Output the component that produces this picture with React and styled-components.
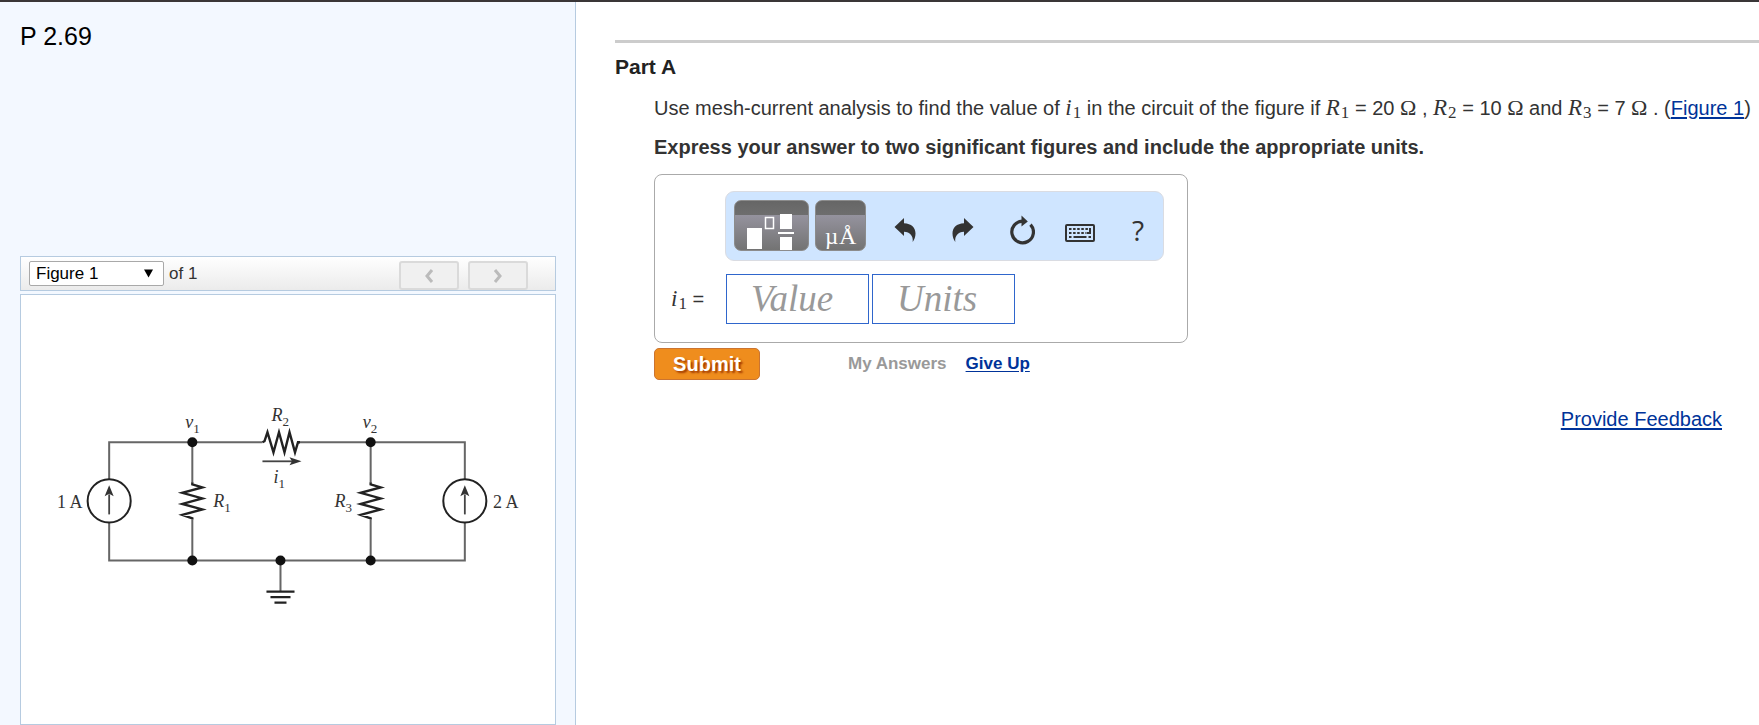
import { useState } from 'react';
import styled, { createGlobalStyle } from 'styled-components';

const sans = '"Liberation Sans", Arial, sans-serif';
const serif = '"Liberation Serif", "Times New Roman", serif';

const GlobalStyle = createGlobalStyle`
	* {
		box-sizing: border-box;
	}
	body {
		margin: 0;
		font-family: ${sans};
		font-size: 20px;
		line-height: 24px;
		color: #333;
		background-color: #fff;
	}
`;

const Page = styled.div`
	min-height: 100vh;
	display: grid;
	grid-template-columns: minmax(320px, 576px) minmax(0, 1fr);
	border-top: 2px solid #3a3637;
`;

const Sidebar = styled.aside`
	display: flex;
	flex-direction: column;
	padding: 19px 19px 0 20px;
	background-color: #f3f8ff;
	border-right: 1px solid #b6cbe0;
`;

const ProblemTitle = styled.h1`
	margin: 0;
	height: 235px;
	font-size: 25px;
	font-weight: 400;
	line-height: 30px;
	color: #000;
`;

const FigureBar = styled.div`
	display: flex;
	align-items: flex-start;
	height: 35px;
	margin-bottom: 3px;
	padding: 4px 27px 0 8px;
	border: 1px solid #b6cbe0;
	background-image: linear-gradient(#fff, #ebebeb);
	font-size: 17px;
	line-height: 26px;
`;

const SelectWrapper = styled.div`
	position: relative;
	width: 135px;
	margin-right: 5px;

	svg {
		position: absolute;
		top: 8px;
		right: 11px;
		pointer-events: none;
	}
`;

const FigureSelect = styled.select`
	display: block;
	width: 100%;
	height: 25px;
	padding: 0 6px;
	appearance: none;
	border: 1px solid #a9a9a9;
	border-radius: 2px;
	background-color: #fff;
	font-family: inherit;
	font-size: 17px;
	color: #000;
`;

const Pager = styled.div`
	display: flex;
	gap: 9px;
	margin-left: auto;
`;

const PagerButton = styled.button`
	display: flex;
	align-items: center;
	justify-content: center;
	width: 60px;
	height: 29px;
	padding: 0;
	border: 2px solid #dadada;
	border-radius: 3px;
	background-color: #f0f0f0;
`;

const FigureFrame = styled.div`
	flex: 1;
	border: 1px solid #b6cbe0;
	border-bottom: none;
	background-color: #fff;

	svg {
		display: block;
		width: 100%;
		height: auto;
		border-bottom: 1px solid #b6cbe0;
	}
`;

const Main = styled.main`
	padding: 38px 0 0 39px;
`;

const PartTitle = styled.h2`
	margin: 0;
	padding-top: 12px;
	border-top: 3px solid #ccc;
	font-size: 21px;
	line-height: 24px;
	color: #222;
`;

const PartBody = styled.div`
	padding: 17px 0 0 39px;
`;

const Question = styled.p`
	margin: 0 0 15px;
`;

const Instruction = styled.p`
	margin: 0 0 15px;
	font-weight: 700;
`;

const Var = styled.var`
	font-family: ${serif};
	font-size: 23px;
	line-height: 20px;

	sub {
		margin-left: 1px;
		font-size: 17px;
		line-height: 0;
		font-style: normal;
		vertical-align: -3px;
	}
`;

const Unit = styled.span`
	font-family: ${serif};
	font-size: 22px;
	line-height: 20px;
`;

const Link = styled.a`
	color: #003399;
	text-decoration: underline;
	text-underline-offset: 2px;
`;

const AnswerBox = styled.div`
	max-width: 534px;
	padding: 16px 23px 18px 14px;
	border: 1px solid #aaa;
	border-radius: 8px;
`;

const Toolbar = styled.div`
	display: flex;
	align-items: flex-start;
	height: 70px;
	margin-left: 56px;
	padding: 8px;
	border: 1px solid #dadce2;
	border-radius: 9px;
	background-color: #cfe5ff;
`;

const PaletteButton = styled.button`
	flex: none;
	width: ${(props) => props.$width}px;
	height: 51px;
	margin-right: 6px;
	padding: 0;
	overflow: hidden;
	border: 1px solid #8c8c8c;
	border-radius: 7px;
	background-image: linear-gradient(#666 0, #6e6e6e 14px, #95939e 14px, #737373 100%);

	svg {
		display: block;
	}
`;

const ToolGroup = styled.div`
	flex: 1;
	display: flex;
	justify-content: space-between;
	padding: 13px 0 0 16px;
`;

const ToolButton = styled.button`
	display: flex;
	align-items: center;
	justify-content: center;
	width: 34px;
	height: 34px;
	padding: 0;
	border: none;
	background: none;
	font-family: "Open Sans", sans-serif;
	font-size: 28px;
	line-height: 28px;
	color: #333;
`;

const AnswerRow = styled.div`
	display: flex;
	align-items: center;
	gap: 3px;
	margin-top: 13px;
`;

const AnswerLabel = styled.label`
	width: 54px;
	padding-left: 2px;
`;

const AnswerInput = styled.input`
	width: 143px;
	height: 50px;
	padding: 0 24px 2px;
	border: 1px solid #2f66cc;
	border-radius: 0;
	background-color: #fff;
	font-family: ${serif};
	font-size: 37px;
	font-style: italic;
	color: #333;

	&::placeholder {
		color: #999;
	}
`;

const Actions = styled.div`
	display: flex;
	align-items: center;
	margin-top: 5px;
	font-size: 17px;
	line-height: 26px;
	font-weight: 700;
`;

const SubmitButton = styled.button`
	width: 106px;
	height: 32px;
	margin-right: 88px;
	padding: 0;
	border: 1px solid #cb7430;
	border-radius: 5px;
	background-color: #ef8d1d;
	font-family: inherit;
	font-size: 20px;
	font-weight: 700;
	color: #fff;
	text-shadow: 2px 2px 2px #a33c00;
`;

const MyAnswers = styled.span`
	margin-right: 19px;
	color: #999;
`;

const Feedback = styled.div`
	padding: 27px 37px 0 0;
	text-align: right;
`;

const UndoIcon = ({ flipped }) => (
	<svg width="22" height="26" viewBox="0 0 22 26" fill="#333">
		<path
			transform={flipped ? 'translate(22 0) scale(-1 1)' : undefined}
			d="M0.500 10 10 1v5.200c7.500.3 11.500 4.500 11.500 10.300 0 3-1 6-2.800 8.500.7-6-2.700-10-8.700-10.200V19z"
		/>
	</svg>
);

const ResetIcon = () => (
	<svg width="26" height="30" viewBox="0 0 26 30">
		<path d="M14 6.200A10.800 10.800 0 1 0 21.500 9.600" fill="none" stroke="#333" strokeWidth="3.200" />
		<path d="M12.500 0.500 18.800 6.500 12.500 11.500z" fill="#333" />
	</svg>
);

const KeyboardIcon = () => (
	<svg width="30" height="25" viewBox="0 -6 30 25">
		<rect x="1" y="1" width="28" height="16" rx="1" fill="none" stroke="#333" strokeWidth="2" />
		<path
			d="M4 5h19M4 9h17"
			fill="none"
			stroke="#333"
			strokeWidth="2"
			strokeDasharray="2.500 1.600"
		/>
		<path d="M4 13h2.500M8.500 13h13M23.500 13h2.500M25 4v6M21.500 9h4" fill="none" stroke="#333" strokeWidth="2" />
	</svg>
);

const TemplatesIcon = () => (
	<svg width="73" height="49" viewBox="0 0 73 49">
		<rect x="12" y="27" width="15" height="21" fill="#fff" />
		<rect x="30.500" y="16.500" width="8" height="11" fill="none" stroke="#fff" strokeWidth="1.500" />
		<rect x="45" y="13" width="12" height="15" fill="#fff" />
		<rect x="43" y="31" width="16" height="2" fill="#fff" />
		<rect x="45" y="36" width="12" height="13" fill="#fff" />
	</svg>
);

const UnitsIcon = () => (
	<svg width="49" height="49" viewBox="0 0 49 49" fill="#fff" fontFamily="Liberation Serif, serif">
		<text x="9" y="43" fontSize="23">
			µ
		</text>
		<text x="23" y="43" fontSize="24">
			Å
		</text>
	</svg>
);

const Chevron = ({ d }) => (
	<svg width="10" height="14" viewBox="0 0 10 14">
		<path d={d} fill="none" stroke="#bbb" strokeWidth="3" />
	</svg>
);

const CurrentSource = ({ x }) => (
	<g>
		<circle cx={x} cy="205.500" r="21.500" fill="#fff" stroke="#222" strokeWidth="2" />
		<path d={`M${x} 219v-20`} stroke="#444" strokeWidth="1.800" />
		<path d={`M${x} 190l4.500 11-4.500-2.500-4.500 2.500z`} fill="#333" />
	</g>
);

const VerticalResistor = ({ x }) => (
	<path
		d={`M${x} 187v2l10 3-20 5.500 20 5.500-20 5.500 20 5.500-20 5.500 10 3.500v1`}
		fill="none"
		stroke="#222"
		strokeWidth="2.400"
	/>
);

const CircuitLabel = ({ x, y, name, sub, italic = true }) => (
	<text x={x} y={y} fontStyle={italic ? 'italic' : 'normal'}>
		{name}
		{sub && (
			<tspan dy="5" fontSize="13" fontStyle="normal">
				{sub}
			</tspan>
		)}
	</text>
);

const nodes = [
	[171, 147],
	[349, 147],
	[171, 265],
	[259, 265],
	[349, 265],
];

const Circuit = () => (
	<svg viewBox="0 0 533 428" role="img" aria-label="Circuit diagram">
		<g fill="none" stroke="#666" strokeWidth="2">
			<path d="M241 147H88V265H443V147H277" />
			<path d="M171 147v40M171 224v41M349 147v40M349 224v41M259 265v31" />
		</g>
		<path
			d="M241 147l2-1 3-9 6 20 5.500-20 5.500 20 5-20 5.500 20 3-10h2"
			fill="none"
			stroke="#222"
			strokeWidth="2.400"
		/>
		<VerticalResistor x={171} />
		<VerticalResistor x={349} />
		<CurrentSource x={88} />
		<CurrentSource x={443} />
		<path d="M241 166h30" stroke="#444" strokeWidth="1.800" />
		<path d="M280 166l-12 4 2.500-4-2.500-4z" fill="#333" />
		<path d="M245 296h28M249 301.500h20M253 307h12" stroke="#222" strokeWidth="2.200" />
		{nodes.map(([x, y]) => (
			<circle key={`${x}-${y}`} cx={x} cy={y} r="5" fill="#111" />
		))}
		<g fontFamily="Liberation Serif, serif" fontSize="18" fill="#333">
			<CircuitLabel x={164} y={133} name="v" sub="1" />
			<CircuitLabel x={341} y={133} name="v" sub="2" />
			<CircuitLabel x={250} y={126} name="R" sub="2" />
			<CircuitLabel x={252} y={188} name="i" sub="1" />
			<CircuitLabel x={192} y={212} name="R" sub="1" />
			<CircuitLabel x={313} y={212} name="R" sub="3" />
			<CircuitLabel x={36} y={213} name="1 A" italic={false} />
			<CircuitLabel x={471} y={213} name="2 A" italic={false} />
		</g>
	</svg>
);

const App = () => {
	const [value, setValue] = useState('');
	const [units, setUnits] = useState('');

	return (
		<>
			<GlobalStyle />
			<Page>
				<Sidebar>
					<ProblemTitle>P 2.69</ProblemTitle>
					<FigureBar>
						<SelectWrapper>
							<FigureSelect aria-label="Figure">
								<option>Figure 1</option>
							</FigureSelect>
							<svg width="9" height="9" viewBox="0 0 10 9">
								<path d="M0 0h10L5 9z" />
							</svg>
						</SelectWrapper>
						<span>of 1</span>
						<Pager>
							<PagerButton aria-label="Previous figure" disabled>
								<Chevron d="M8 1 3 7l5 6" />
							</PagerButton>
							<PagerButton aria-label="Next figure" disabled>
								<Chevron d="M2 1l5 6-5 6" />
							</PagerButton>
						</Pager>
					</FigureBar>
					<FigureFrame id="figure">
						<Circuit />
					</FigureFrame>
				</Sidebar>
				<Main>
					<PartTitle>Part A</PartTitle>
					<PartBody>
						<Question>
							Use mesh-current analysis to find the value of{' '}
							<Var>
								i<sub>1</sub>
							</Var>{' '}
							in the circuit of the figure if{' '}
							<Var>
								R<sub>1</sub>
							</Var>{' '}
							= 20 <Unit>Ω</Unit> ,{' '}
							<Var>
								R<sub>2</sub>
							</Var>{' '}
							= 10 <Unit>Ω</Unit> and{' '}
							<Var>
								R<sub>3</sub>
							</Var>{' '}
							= 7 <Unit>Ω</Unit> . (<Link href="#figure">Figure 1</Link>)
						</Question>
						<Instruction>
							Express your answer to two significant figures and include the appropriate units.
						</Instruction>
						<AnswerBox>
							<Toolbar>
								<PaletteButton $width={75} aria-label="Templates">
									<TemplatesIcon />
								</PaletteButton>
								<PaletteButton $width={51} aria-label="Symbols">
									<UnitsIcon />
								</PaletteButton>
								<ToolGroup>
									<ToolButton aria-label="Undo">
										<UndoIcon />
									</ToolButton>
									<ToolButton aria-label="Redo">
										<UndoIcon flipped />
									</ToolButton>
									<ToolButton aria-label="Reset">
										<ResetIcon />
									</ToolButton>
									<ToolButton aria-label="Keyboard shortcuts">
										<KeyboardIcon />
									</ToolButton>
									<ToolButton aria-label="Help">?</ToolButton>
								</ToolGroup>
							</Toolbar>
							<AnswerRow>
								<AnswerLabel htmlFor="value">
									<Var>
										i<sub>1</sub>
									</Var>{' '}
									=
								</AnswerLabel>
								<AnswerInput
									id="value"
									placeholder="Value"
									value={value}
									onChange={(e) => setValue(e.target.value)}
								/>
								<AnswerInput
									aria-label="Units"
									placeholder="Units"
									value={units}
									onChange={(e) => setUnits(e.target.value)}
								/>
							</AnswerRow>
						</AnswerBox>
						<Actions>
							<SubmitButton type="button">Submit</SubmitButton>
							<MyAnswers>My Answers</MyAnswers>
							<Link href="#give-up">Give Up</Link>
						</Actions>
					</PartBody>
					<Feedback>
						<Link href="#feedback">Provide Feedback</Link>
					</Feedback>
				</Main>
			</Page>
		</>
	);
};

export default App;
